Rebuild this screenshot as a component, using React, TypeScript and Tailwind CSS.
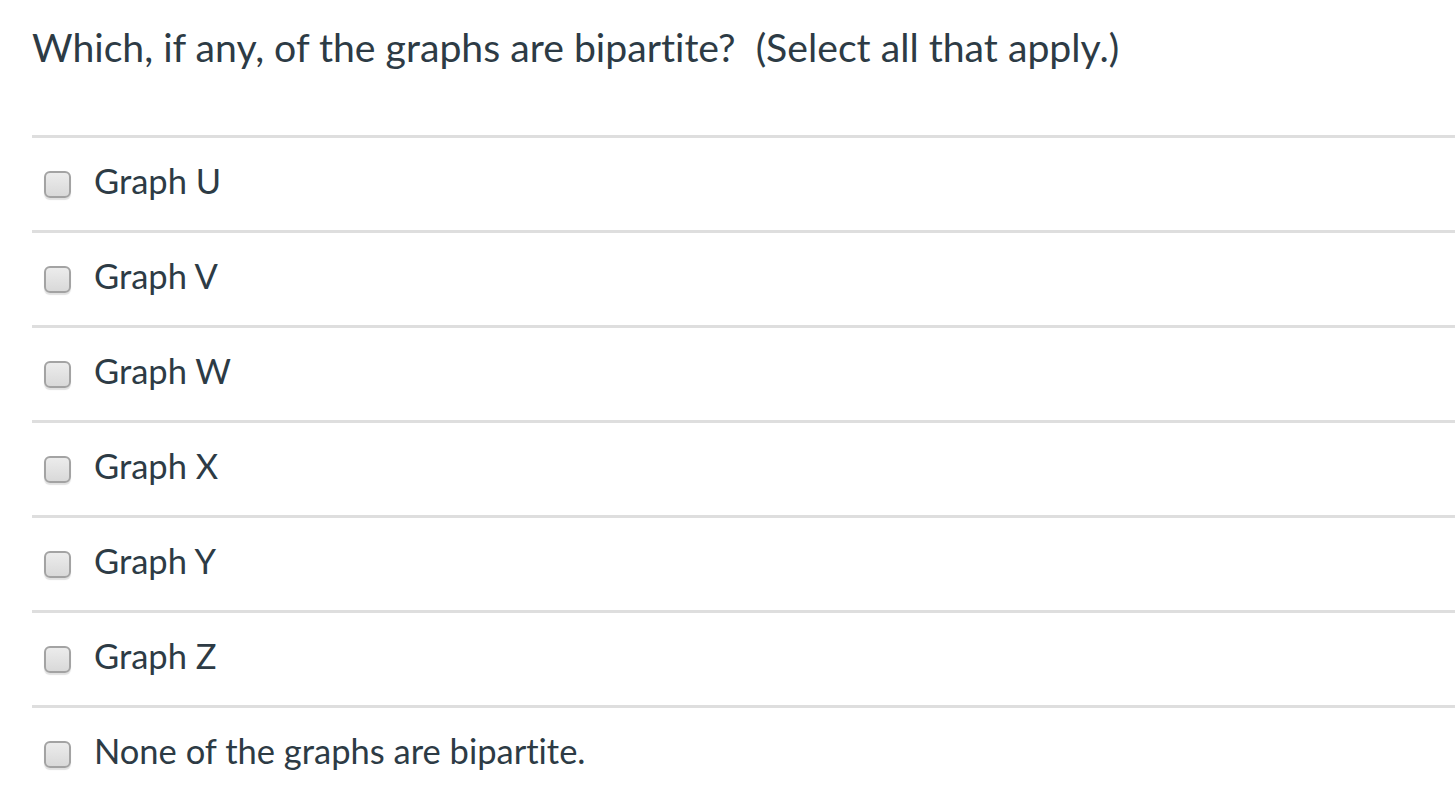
const options = [
  'Graph U',
  'Graph V',
  'Graph W',
  'Graph X',
  'Graph Y',
  'Graph Z',
  'None of the graphs are bipartite.',
];

function FakeCheckbox() {
  return (
    <span className="h-[27px] w-[27px] shrink-0 rounded-[6px] border-2 border-[#a3a3a3] bg-gradient-to-b from-[#ececec] to-[#d9d9d9] shadow-[0_2px_1px_rgba(0,0,0,0.12)]" />
  );
}

export default function App() {
  return (
    <div className="min-h-screen bg-white pl-8 pt-[19px] font-['Lato',sans-serif] text-[#2d3b45] [font-variant-ligatures:none]">
      <h1 className="text-[39.2px] leading-[56px] font-normal">
        Which, if any, of the graphs are bipartite?&nbsp; (Select all that apply.)
      </h1>
      <div className="mt-[60px]">
        {options.map((label) => (
          <label
            key={label}
            className="flex h-[95px] items-center gap-[23px] border-t-[3px] border-[#dedede] pl-3"
          >
            <FakeCheckbox />
            <span className="-mt-[5px] text-[34.5px] leading-none">{label}</span>
          </label>
        ))}
      </div>
    </div>
  );
}
